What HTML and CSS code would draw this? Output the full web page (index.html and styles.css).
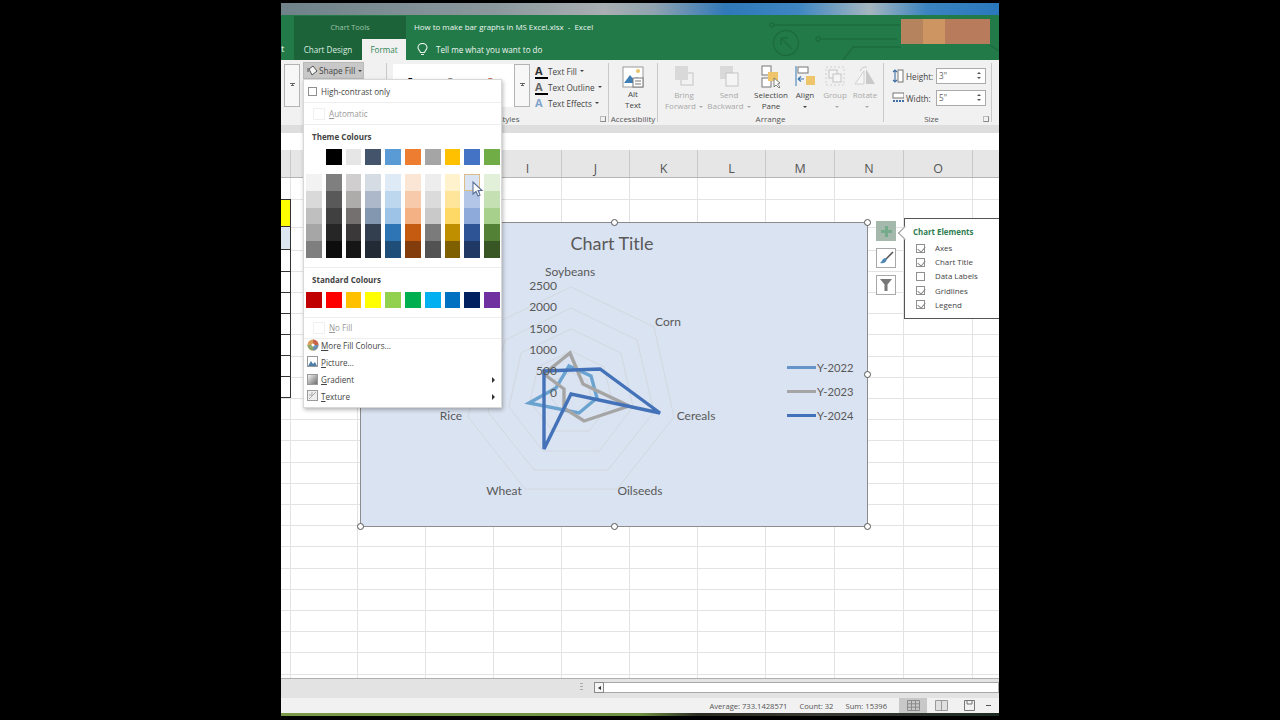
FILE: index.html
```html
<!DOCTYPE html>
<html lang="en">

<head>
    <meta charset="UTF-8">
    <meta name="viewport" content="width=device-width, initial-scale=1.0">
    <title>How to make bar graphs in MS Excel.xlsx - Excel</title>
    <link rel="stylesheet" href="styles.css">
</head>

<body>
    <div class="screen">
        <div class="desktop-strip"></div>

        <!-- title bar -->
        <div class="titlebar">
            <div class="tab-stub">t</div>
            <div class="chart-tools">
                <div class="chart-tools-label">Chart Tools</div>
                <div class="chart-tabs">
                    <div class="tab-design">Chart Design</div>
                    <div class="tab-format">Format</div>
                </div>
            </div>
            <div class="title-text">
                <div class="doc-name">How to make bar graphs in MS Excel.xlsx &nbsp;-&nbsp; Excel</div>
                <div class="tell-me">
                    <svg class="bulb" width="11" height="13" viewBox="0 0 11 13">
                        <path d="M3.5 9.5 C3 7.5 1 6.8 1 4.6 A4.5 4.2 0 0 1 10 4.6 C10 6.8 8 7.5 7.5 9.5 Z M4 11.5 H7" fill="none" stroke="#e8f2eb" stroke-width="1.1" />
                    </svg>
                    <span>Tell me what you want to do</span>
                </div>
            </div>
            <div class="user-blur">
                <div class="blur-a"></div>
                <div class="blur-b"></div>
                <div class="blur-c"></div>
            </div>
            <svg class="circuit" width="260" height="45" viewBox="0 0 260 45">
                <g fill="none" stroke="#1d6b3f" stroke-width="1.4">
                    <circle cx="47" cy="28" r="12.500" />
                    <path d="M42 23 L53 34 M42 23 H49 M42 23 V30" />
                    <path d="M35 10 H161" />
                    <circle cx="33" cy="10" r="2" />
                    <path d="M81 24 H158" />
                    <circle cx="79" cy="24" r="2" />
                    <path d="M104 45 L114 32 H162" />
                    <path d="M251 30 L260 36" />
                </g>
            </svg>
        </div>

        <!-- ribbon -->
        <div class="ribbon">
            <div class="group group-shape">
                <div class="more-btn short"><span class="more-arrow"></span></div>
                <div class="shape-fill-btn">
                    <svg width="12" height="11" viewBox="0 0 12 11">
                        <path d="M3 4 L7 1 L11 6 L6 10 Z" fill="#f4f4f4" stroke="#555" />
                        <path d="M2 3 V7" stroke="#777" stroke-width="1.5" />
                    </svg>
                    <span>Shape Fill</span>
                    <span class="caret"></span>
                </div>
            </div>

            <div class="group group-wordart">
                <div class="group-body">
                    <div class="wordart-gallery">
                        <span class="wa wa-black">A</span>
                        <span class="wa wa-gray">A</span>
                        <span class="wa wa-red">A</span>
                    </div>
                    <div class="more-btn"><span class="more-arrow"></span></div>
                    <div class="text-tools">
                        <div class="text-tool"><span class="a-icon a-fill">A</span>Text Fill<span class="caret"></span></div>
                        <div class="text-tool"><span class="a-icon a-outline">A</span>Text Outline<span class="caret"></span></div>
                        <div class="text-tool"><span class="a-icon a-effects">A</span>Text Effects<span class="caret"></span></div>
                    </div>
                </div>
                <div class="group-label wordart-label">WordArt Styles</div>
                <span class="launcher"></span>
            </div>

            <div class="group group-access">
                <div class="group-body">
                    <div class="tool tool-alt">
                        <div class="tool-icon">
                            <svg width="22" height="22" viewBox="0 0 22 22">
                                <rect x="1" y="1" width="20" height="20" fill="#fff" stroke="#9a9a9a" />
                                <path d="M2 17 L8 9 L12 14 L15 11 L20 17 Z" fill="#3f7fb5" />
                                <circle cx="16" cy="5" r="2" fill="#e9c46a" />
                                <rect x="11" y="12" width="10" height="9" fill="#fff" stroke="#777" />
                                <path d="M13 15 H19 M13 18 H19" stroke="#777" />
                            </svg>
                        </div>
                        <div>Alt</div>
                        <div>Text</div>
                    </div>
                </div>
                <div class="group-label">Accessibility</div>
            </div>

            <div class="group group-arrange">
                <div class="group-body">
                    <div class="tool tool-off w-bring">
                        <div class="tool-icon">
                            <svg width="20" height="22" viewBox="0 0 20 22">
                                <rect x="7" y="8" width="12" height="12" fill="#f2f2f2" stroke="#c4c4c4" />
                                <rect x="1" y="1" width="13" height="14" fill="#d9d9d9" />
                            </svg>
                        </div>
                        <div>Bring</div>
                        <div>Forward<span class="caret"></span></div>
                    </div>
                    <div class="tool tool-off w-send">
                        <div class="tool-icon">
                            <svg width="20" height="22" viewBox="0 0 20 22">
                                <rect x="1" y="1" width="13" height="13" fill="#d9d9d9" />
                                <rect x="7" y="8" width="12" height="13" fill="#f5f5f5" stroke="#c4c4c4" />
                            </svg>
                        </div>
                        <div>Send</div>
                        <div>Backward<span class="caret"></span></div>
                    </div>
                    <div class="tool w-pane">
                        <div class="tool-icon">
                            <svg width="20" height="23" viewBox="0 0 20 23">
                                <rect x="1" y="1" width="9" height="9" fill="#fff" stroke="#777" />
                                <rect x="1" y="13" width="9" height="9" fill="#fff" stroke="#777" />
                                <rect x="7" y="7" width="10" height="9" fill="#eec56b" />
                                <path d="M13 13 V22 L15 20 L18 23 L19 22 L16.5 19 L19 18 Z" fill="#fff" stroke="#666" stroke-width=".8" />
                            </svg>
                        </div>
                        <div>Selection</div>
                        <div>Pane</div>
                    </div>
                    <div class="tool w-align">
                        <div class="tool-icon">
                            <svg width="20" height="22" viewBox="0 0 20 22">
                                <path d="M1 1 V21" stroke="#6b9bc5" stroke-width="1.4" />
                                <rect x="3" y="2" width="10" height="6" fill="#fff" stroke="#777" />
                                <rect x="11" y="11" width="9" height="9" fill="#eec56b" />
                                <path d="M3 14 H9 M3 14 L6 11.5 M3 14 L6 16.5" fill="none" stroke="#3d78ad" stroke-width="1.2" />
                            </svg>
                        </div>
                        <div>Align</div>
                        <div><span class="caret dark"></span></div>
                    </div>
                    <div class="tool tool-off w-group">
                        <div class="tool-icon">
                            <svg width="20" height="22" viewBox="0 0 20 22">
                                <rect x="1" y="2" width="18" height="18" fill="none" stroke="#cfcfcf" stroke-dasharray="2 2" />
                                <rect x="4" y="5" width="8" height="8" fill="#f5f5f5" stroke="#c4c4c4" />
                                <rect x="8" y="9" width="8" height="8" fill="#f5f5f5" stroke="#c4c4c4" />
                            </svg>
                        </div>
                        <div>Group</div>
                        <div><span class="caret"></span></div>
                    </div>
                    <div class="tool tool-off w-rotate">
                        <div class="tool-icon">
                            <svg width="22" height="22" viewBox="0 0 22 22">
                                <path d="M12 4 L21 19 H12 Z" fill="#c9c9c9" />
                                <path d="M10 6 L10 19 H1 Z" fill="#f5f5f5" stroke="#cfcfcf" />
                                <path d="M6 6 A7 7 0 0 1 13 2" fill="none" stroke="#c9c9c9" />
                            </svg>
                        </div>
                        <div>Rotate</div>
                        <div><span class="caret"></span></div>
                    </div>
                </div>
                <div class="group-label arrange-label">Arrange</div>
            </div>

            <div class="group group-size">
                <div class="group-body size-body">
                    <div class="size-row">
                        <svg width="12" height="14" viewBox="0 0 12 14">
                            <rect x="6" y="1" width="5" height="12" fill="#fff" stroke="#777" />
                            <path d="M3 1 V13 M1 3 L3 1 L5 3 M1 11 L3 13 L5 11" fill="none" stroke="#3d6fa5" stroke-width="1.1" />
                        </svg>
                        <span class="size-name">Height:</span>
                        <div class="size-input">3"<span class="spin"><i class="up"></i><i class="down"></i></span></div>
                    </div>
                    <div class="size-row">
                        <svg width="12" height="12" viewBox="0 0 12 12">
                            <rect x="1" y="1" width="11" height="5" fill="#fff" stroke="#777" />
                            <path d="M1 9 H12" stroke="#3d6fa5" stroke-width="2" stroke-dasharray="2 1" />
                        </svg>
                        <span class="size-name">Width:</span>
                        <div class="size-input">5"<span class="spin"><i class="up"></i><i class="down"></i></span></div>
                    </div>
                </div>
                <div class="group-label size-label">Size</div>
                <span class="launcher"></span>
            </div>
        </div>

        <div class="ribbon-gap"></div>
        <div class="formula-bar"></div>

        <!-- sheet -->
        <div class="cols col-heads">
            <div></div>
            <div>F</div>
            <div>G</div>
            <div>H</div>
            <div>I</div>
            <div>J</div>
            <div>K</div>
            <div>L</div>
            <div>M</div>
            <div>N</div>
            <div>O</div>
            <div></div>
        </div>
        <div class="cols grid">
            <div class="left-cells">
                <div class="cell-yellow"></div>
                <div class="cell-blue"></div>
                <div class="cell-a"></div>
                <div class="cell-b"></div>
                <div class="cell-b"></div>
                <div class="cell-b"></div>
                <div class="cell-b"></div>
                <div class="cell-b"></div>
                <div class="cell-b"></div>
            </div>
            <div></div><div></div><div></div><div></div><div></div><div></div>
            <div></div><div></div><div></div><div></div><div></div>
        </div>

        <div class="sheet-bar">
            <div class="grip"></div>
            <div class="scroll-left"><span></span></div>
            <div class="scroll-track"></div>
        </div>

        <div class="status">
            <span class="stat avg">Average: 733.1428571</span>
            <span class="stat count">Count: 32</span>
            <span class="stat sum">Sum: 15396</span>
            <div class="view-btn active">
                <svg width="13" height="11" viewBox="0 0 13 11">
                    <path d="M.5 .5 H12.5 V10.5 H.5 Z M.5 3.8 H12.5 M.5 7.2 H12.5 M4.5 .5 V10.5 M8.5 .5 V10.5" fill="none" stroke="#8a8a8a" />
                </svg>
            </div>
            <div class="view-btn">
                <svg width="13" height="11" viewBox="0 0 13 11">
                    <path d="M.5 .5 H12.5 V10.5 H.5 Z M6.5 .5 V10.5" fill="#e0e0e0" stroke="#9a9a9a" />
                </svg>
            </div>
            <div class="view-btn">
                <svg width="13" height="11" viewBox="0 0 13 11">
                    <path d="M1.5 .5 H11.5 V10.5 H1.5 Z M4 .5 V4 H9 V.5" fill="none" stroke="#777" />
                </svg>
            </div>
            <div class="zoom-minus"></div>
        </div>
        <div class="bottom-strip"></div>

        <!-- chart -->
        <div class="chart">
            <svg class="radar" width="506" height="303" viewBox="0 0 506 303">
                <g transform="translate(210 170)">
                    <g fill="none" stroke="#d2d8e0" stroke-width="1">
                        <polygon points="0,-106 83,-66 103,24 46,96 -46,96 -103,24 -83,-66" />
                        <polygon points="0,-85 66,-53 83,19 37,77 -37,77 -83,19 -66,-53" />
                        <polygon points="0,-64 50,-40 62,14 28,58 -28,58 -62,14 -50,-40" />
                        <polygon points="0,-42 33,-26 41,9 18,38 -18,38 -41,9 -33,-26" />
                        <polygon points="0,-21 16,-13 20,5 9,19 -9,19 -20,5 -16,-13" />
                    </g>
                    <g fill="none" stroke-width="3.4" stroke-linejoin="miter">
                        <polygon points="-2,-27 20,-17 26,5 8,20 -42,10 -15,-5" stroke="#6ba3d0" />
                        <polygon points="-27,-19 -1,-40 12,-9 58,13 13,28 -7,15 -7,-4" stroke="#a5a5a5" />
                        <polygon points="-27,-22 29,-24 89,20 0,1 -27,56" stroke="#4472b8" />
                    </g>
                </g>
                <g class="axis-labels">
                    <text x="196" y="67">2500</text>
                    <text x="196" y="88">2000</text>
                    <text x="196" y="110">1500</text>
                    <text x="196" y="131">1000</text>
                    <text x="196" y="152">500</text>
                    <text x="196" y="174">0</text>
                </g>
                <text class="chart-title" x="251" y="27">Chart Title</text>
                <g class="cat-labels">
                    <text x="209" y="53">Soybeans</text>
                    <text x="307" y="103">Corn</text>
                    <text x="335" y="197">Cereals</text>
                    <text x="279" y="272">Oilseeds</text>
                    <text x="143" y="272">Wheat</text>
                    <text x="90" y="197">Rice</text>
                </g>
                <g stroke-width="3">
                    <path d="M426 144.500 H455" stroke="#6494c8" />
                    <path d="M426 168.500 H455" stroke="#a5a5a5" />
                    <path d="M426 192.500 H455" stroke="#4472b8" />
                </g>
                <g class="legend-labels">
                    <text x="456" y="149">Y-2022</text>
                    <text x="456" y="173">Y-2023</text>
                    <text x="456" y="197">Y-2024</text>
                </g>
            </svg>
            <span class="handle h-tl"></span>
            <span class="handle h-tc"></span>
            <span class="handle h-tr"></span>
            <span class="handle h-ml"></span>
            <span class="handle h-mr"></span>
            <span class="handle h-bl"></span>
            <span class="handle h-bc"></span>
            <span class="handle h-br"></span>
        </div>

        <div class="chart-btn btn-plus">
            <svg width="13" height="13" viewBox="0 0 13 13">
                <path d="M6.500 1 V12 M1 6.500 H12" stroke="#74ab8b" stroke-width="3" />
            </svg>
        </div>
        <div class="chart-btn btn-brush">
            <svg width="15" height="15" viewBox="0 0 15 15">
                <path d="M14 1 L7 8" stroke="#555" stroke-width="1.5" />
                <path d="M8 8 C7 12 4 13 1 12 C3 11 3 8 6 7 Z" fill="#4b86b5" />
            </svg>
        </div>
        <div class="chart-btn btn-filter">
            <svg width="14" height="14" viewBox="0 0 14 14">
                <path d="M1 1 H13 L8.500 6.500 V13 H5.500 V6.500 Z" fill="#777" />
            </svg>
        </div>

        <div class="elements-panel">
            <div class="panel-title">Chart Elements</div>
            <div class="el-row"><span class="check on"></span>Axes</div>
            <div class="el-row"><span class="check on"></span>Chart Title</div>
            <div class="el-row"><span class="check"></span>Data Labels</div>
            <div class="el-row"><span class="check on"></span>Gridlines</div>
            <div class="el-row"><span class="check on"></span>Legend</div>
        </div>

        <!-- shape fill menu -->
        <div class="menu">
            <div class="menu-row contrast"><span class="check menu-check"></span>High-contrast only</div>
            <div class="menu-row auto"><span class="ghost-swatch"></span><span><u>A</u>utomatic</span></div>
            <div class="menu-head theme-head">Theme Colours</div>
            <div class="swatches" id="themeRow"></div>
            <div class="shades" id="shadeGrid"></div>
            <div class="menu-head std-head">Standard Colours</div>
            <div class="swatches" id="standardRow"></div>
            <div class="menu-row nofill"><span class="ghost-swatch"></span><span><u>N</u>o Fill</span></div>
            <div class="menu-item">
                <svg width="12" height="12" viewBox="0 0 12 12">
                    <circle cx="6" cy="6" r="5.500" fill="#d9a05b" />
                    <path d="M6 6 L6 .5 A5.500 5.500 0 0 1 11.500 6 Z" fill="#c9654b" />
                    <path d="M6 6 L11.500 6 A5.500 5.500 0 0 1 6 11.500 Z" fill="#6d8fb0" />
                    <path d="M6 6 L6 11.500 A5.500 5.500 0 0 1 .5 6 Z" fill="#8da86b" />
                    <circle cx="6" cy="6" r="1.500" fill="#fff" />
                </svg>
                <span><u>M</u>ore Fill Colours...</span>
            </div>
            <div class="menu-item">
                <svg width="12" height="12" viewBox="0 0 12 12">
                    <rect x=".5" y=".5" width="10" height="10" fill="#fff" stroke="#999" />
                    <path d="M1 10 L4 5 L6 8 L8 6 L10 10 Z" fill="#4d7ea8" />
                </svg>
                <span><u>P</u>icture...</span>
            </div>
            <div class="menu-item">
                <span class="gradient-icon"></span>
                <span><u>G</u>radient</span>
                <span class="sub-arrow"></span>
            </div>
            <div class="menu-item">
                <svg width="12" height="12" viewBox="0 0 12 12">
                    <rect x=".5" y=".5" width="10" height="10" fill="#eee" stroke="#999" />
                    <path d="M2 9 L9 2 M2 5 H5 V2" fill="none" stroke="#aaa" />
                </svg>
                <span><u>T</u>exture</span>
                <span class="sub-arrow"></span>
            </div>
        </div>

        <svg class="cursor" width="12" height="16" viewBox="0 0 12 16">
            <path d="M1 1 V13 L4 10.500 L6 15 L8 14 L6 9.500 H10 Z" fill="#fff" stroke="#5a6f96" stroke-width="1.100" />
        </svg>
    </div>

    <script src="script.js"></script>
</body>

</html>
```

FILE: styles.css
```css
* {
    box-sizing: border-box;
}

html,
body {
    height: 100%;
}

body {
    margin: 0;
    background: #000;
    display: flex;
    justify-content: center;
    overflow: hidden;
    font-family: "Open Sans", "Liberation Sans", sans-serif;
    font-size: 8.2px;
    color: #444;
}

.screen {
    position: relative;
    width: 718px;
    height: 720px;
    padding: 3px 0 4px;
    display: flex;
    flex-direction: column;
    overflow: hidden;
}

.desktop-strip {
    height: 12px;
    background: linear-gradient(to right, #6f8289 0, #8b999e 30%, #a9afb2 45%, #8fa3b0 52%, #2f78b9 62%, #3d86c2 72%, #a5b6bf 82%, #3a83c0 90%, #2a78bd 100%);
}

/* title bar */
.titlebar {
    position: relative;
    height: 45px;
    background: #217a48;
    display: flex;
    color: #f0f6f2;
    font-size: 8.1px;
}

.tab-stub {
    width: 13px;
    padding-top: 27px;
    line-height: 14px;
    font-size: 9.5px;
}

.chart-tools {
    width: 112px;
    margin-top: 1px;
    background: #1c6339;
    display: flex;
    flex-direction: column;
    position: relative;
    z-index: 1;
}

.chart-tools-label {
    height: 23px;
    line-height: 22px;
    text-align: center;
    color: #9cc4ab;
    font-size: 7.4px;
}

.chart-tabs {
    display: flex;
    height: 21px;
    line-height: 21px;
}

.tab-design {
    width: 68px;
    text-align: center;
    color: #dcebe2;
}

.tab-format {
    width: 44px;
    text-align: center;
    background: #f1f1f1;
    color: #2f8455;
}

.title-text {
    padding-left: 8px;
    position: relative;
    z-index: 1;
}

.doc-name {
    height: 24px;
    line-height: 24px;
    font-size: 7.9px;
}

.tell-me {
    display: flex;
    align-items: center;
    gap: 8px;
    padding-left: 3px;
    height: 20px;
}

.user-blur {
    position: absolute;
    left: 620px;
    top: 4px;
    z-index: 1;
    width: 89px;
    height: 25px;
    display: flex;
}

.blur-a {
    width: 22px;
    background: #b5845f;
}

.blur-b {
    width: 22px;
    background: #cd9561;
}

.blur-c {
    flex: 1;
    background: #b87b5c;
}

.circuit {
    position: absolute;
    left: 458px;
    top: 0;
}

/* ribbon */
.ribbon {
    height: 65px;
    padding-top: 3px;
    background: #f1f1f1;
    display: flex;
}

.group {
    position: relative;
    height: 59px;
    border-right: 1px solid #c8c8c8;
}

.group-body {
    height: 50px;
    display: flex;
}

.group-label {
    height: 9px;
    line-height: 12px;
    text-align: center;
    color: #555;
    font-size: 8px;
}

.launcher {
    position: absolute;
    right: 2px;
    bottom: 0;
    width: 6px;
    height: 6px;
    border: 1px solid #888;
    border-top-color: #bbb;
    border-left-color: #bbb;
}

.caret {
    display: inline-block;
    width: 0;
    height: 0;
    margin-left: 3px;
    vertical-align: middle;
    border-left: 2.500px solid transparent;
    border-right: 2.500px solid transparent;
    border-top: 2.500px solid currentColor;
}

.caret.dark {
    color: #444;
    margin-left: 0;
}

.more-btn {
    width: 16px;
    height: 43px;
    margin-top: 1px;
    background: #f7f7f7;
    border: 1px solid #b4b4b4;
    display: flex;
    align-items: center;
    justify-content: center;
}

.more-btn.short {
    flex: none;
    margin-left: 3px;
}

.more-arrow {
    width: 5px;
    height: 5px;
    border-top: 1px solid #666;
    border-bottom: 2px solid transparent;
    background: linear-gradient(135deg, transparent 50%, #666 50%) left / 50% 100% no-repeat, linear-gradient(225deg, transparent 50%, #666 50%) right / 50% 100% no-repeat;
}

.group-shape {
    width: 106px;
    display: flex;
    align-items: flex-start;
}

.shape-fill-btn {
    width: 61px;
    height: 17px;
    margin: -1px 0 0 3px;
    padding-left: 2px;
    background: #c8c8c8;
    border: 1px solid #b9b9b9;
    display: flex;
    align-items: center;
    gap: 1px;
    color: #444;
    white-space: nowrap;
}

.shape-fill-btn .caret {
    margin-left: 2px;
}

.group-wordart {
    width: 222px;
}

.group-wordart .group-body {
    padding-left: 6px;
}

.wordart-gallery {
    width: 121px;
    height: 43px;
    margin-top: 1px;
    background: #fff;
    display: flex;
    padding: 11px 0 0 11px;
    gap: 22px;
    overflow: hidden;
}

.wa {
    font-size: 18px;
    line-height: 18px;
    font-weight: 700;
    width: 18px;
}

.wa-black {
    color: #000;
}

.wa-gray {
    color: #8a8a8a;
}

.wa-red {
    color: #c8735e;
}

.text-tools {
    margin-left: 5px;
}

.text-tool {
    height: 16px;
    display: flex;
    align-items: center;
    color: #444;
}

.a-icon {
    width: 13px;
    font-size: 11px;
    font-weight: 700;
    line-height: 13px;
    text-align: left;
    border-bottom: 2px solid transparent;
}

.a-fill {
    color: #333;
    border-bottom-color: #000;
}

.a-outline {
    color: #666;
    border-bottom-color: #000;
}

.a-effects {
    color: #7fa4cc;
}

.wordart-label {
    width: 210px;
}

.group-access {
    width: 49px;
}

.tool {
    flex: none;
    text-align: center;
    line-height: 11px;
    font-size: 8px;
    color: #444;
    white-space: nowrap;
}

.tool-off {
    color: #a9a9a9;
}

.tool-icon {
    height: 26px;
    padding-top: 2px;
    display: flex;
    justify-content: center;
    align-items: flex-start;
}

.tool-alt {
    width: 48px;
}

.tool-alt .tool-icon {
    padding-top: 3px;
    height: 25px;
}

.group-arrange {
    width: 226px;
}

.group-arrange .group-body {
    padding-left: 3px;
}

.w-bring {
    width: 46px;
}

.w-send {
    width: 44px;
}

.w-pane {
    width: 40px;
}

.w-align {
    width: 28px;
}

.w-group {
    width: 32px;
}

.w-rotate {
    width: 28px;
}

.group-size {
    width: 108px;
}

.size-body {
    display: block;
    padding: 5px 0 0 8px;
}

.size-row {
    height: 16px;
    margin-bottom: 6px;
    display: flex;
    align-items: center;
    gap: 2px;
}

.size-row svg {
    flex: none;
}

.size-name {
    width: 28px;
    color: #444;
}

.size-input {
    width: 50px;
    height: 16px;
    padding-left: 2px;
    line-height: 14px;
    background: #fff;
    border: 1px solid #aaa;
    position: relative;
    color: #666;
}

.spin {
    position: absolute;
    right: 4px;
    top: 3px;
    display: flex;
    flex-direction: column;
    gap: 3px;
}

.spin i {
    width: 0;
    height: 0;
    border-left: 2px solid transparent;
    border-right: 2px solid transparent;
}

.spin .up {
    border-bottom: 2px solid #555;
}

.spin .down {
    border-top: 2px solid #555;
}

.size-label {
    padding-right: 12px;
}

.ribbon-gap {
    height: 8px;
    background: #dedede;
}

.formula-bar {
    height: 17px;
    background: #fff;
}

/* sheet */
.cols {
    display: grid;
    grid-template-columns: 10px 67px 68px 68px 68px 68px 68px 68px 69px 69px 69px 26px;
}

.col-heads {
    height: 28px;
    background: #e6e6e6;
    border-bottom: 1px solid #b5b5b5;
    font-size: 12.5px;
    text-align: center;
    color: #555;
}

.col-heads > div {
    border-right: 1px solid #c9c9c9;
    height: 27px;
    line-height: 38px;
    overflow: hidden;
}

.col-heads > div:last-child {
    border-right: 0;
}

.grid {
    flex: 1;
    background:
        linear-gradient(#e3e3e3, #e3e3e3) 0 21px / 100% 1px no-repeat,
        linear-gradient(#e3e3e3, #e3e3e3) 0 49px / 100% 1px no-repeat,
        repeating-linear-gradient(to bottom, #e3e3e3 0, #e3e3e3 1px, #fff 1px, #fff 21px, #e3e3e3 21px, #e3e3e3 22px, #fff 22px, #fff 42px, #e3e3e3 42px, #e3e3e3 43px, #fff 43px, #fff 63px, #e3e3e3 63px, #e3e3e3 64px, #fff 64px, #fff 84px, #e3e3e3 84px, #e3e3e3 85px, #fff 85px, #fff 106px) 0 72px / 100% 100% no-repeat,
        #fff;
}

.grid > div {
    border-right: 1px solid #e3e3e3;
}

.grid > div:last-child {
    border-right: 0;
}

.left-cells {
    padding-top: 21px;
}

.left-cells div {
    border-right: 1px solid #333;
    border-bottom: 1px solid #333;
    margin-right: -1px;
    background: #fff;
}

.left-cells .cell-yellow {
    height: 28px;
    background: #ffff00;
    border-top: 1px solid #333;
}

.left-cells .cell-blue {
    height: 23px;
    background: #dce6f1;
}

.cell-a {
    height: 22px;
}

.cell-b {
    height: 21px;
}

.sheet-bar {
    height: 20px;
    background: #e3e3e3;
    border-top: 1px solid #b0b0b0;
    display: flex;
    align-items: center;
    padding: 0 0 2px 299px;
}

.grip {
    width: 3px;
    height: 9px;
    margin-right: 11px;
    background: repeating-linear-gradient(to bottom, #aaa 0, #aaa 1px, transparent 1px, transparent 3px);
}

.scroll-left {
    width: 10px;
    height: 11px;
    background: #f5f5f5;
    border: 1px solid #8a8a8a;
    display: flex;
    align-items: center;
    justify-content: center;
}

.scroll-left span {
    width: 0;
    height: 0;
    border-top: 2.500px solid transparent;
    border-bottom: 2.500px solid transparent;
    border-right: 3px solid #333;
}

.scroll-track {
    flex: 1;
    height: 11px;
    background: #fff;
    border: 1px solid #a8a8a8;
    border-left: 0;
}

.status {
    height: 15px;
    background: #f1f1f1;
    display: flex;
    align-items: center;
    justify-content: flex-end;
    font-size: 7.6px;
    color: #555;
    white-space: nowrap;
}

.stat {
    margin-right: 12px;
}

.view-btn {
    width: 28px;
    height: 15px;
    display: flex;
    align-items: center;
    justify-content: center;
}

.view-btn.active {
    background: #c8c8c8;
}

.zoom-minus {
    width: 16px;
    height: 15px;
    background: linear-gradient(#555, #555) 3px 7px / 5px 1px no-repeat;
}

.bottom-strip {
    height: 3px;
    background: linear-gradient(to right, #7a9a48 0, #6f9143 50%, #2a2a22 58%, #3b3a34 75%, #1c2a22 100%);
}

/* chart */
.chart {
    position: absolute;
    left: 79px;
    top: 222px;
    width: 508px;
    height: 305px;
    background: #dae3f1;
    border: 1px solid #8c8c8c;
}

.radar {
    display: block;
    font-family: "Lato", "Liberation Sans", sans-serif;
    fill: #595959;
    font-size: 12px;
}

.axis-labels {
    text-anchor: end;
}

.cat-labels {
    text-anchor: middle;
}

.chart-title {
    text-anchor: middle;
    font-size: 18px;
}

.legend-labels {
    font-size: 11.200px;
}

.handle {
    position: absolute;
    width: 7px;
    height: 7px;
    border-radius: 50%;
    background: #fff;
    border: 1.200px solid #555;
}

.h-tl,
.h-tc,
.h-tr {
    top: -4px;
}

.h-ml,
.h-mr {
    top: 148px;
}

.h-bl,
.h-bc,
.h-br {
    bottom: -4px;
}

.h-tl,
.h-ml,
.h-bl {
    left: -4px;
}

.h-tc,
.h-bc {
    left: 250px;
}

.h-tr,
.h-mr,
.h-br {
    right: -4px;
}

.chart-btn {
    position: absolute;
    left: 595px;
    width: 20px;
    height: 20px;
    background: #fff;
    border: 1px solid #a8a8a8;
    display: flex;
    align-items: center;
    justify-content: center;
}

.btn-plus {
    top: 221px;
    background: #a4b8ac;
    border-color: #a4b8ac;
}

.btn-brush {
    top: 248px;
}

.btn-filter {
    top: 275px;
}

.elements-panel {
    position: absolute;
    left: 623px;
    top: 218px;
    width: 110px;
    height: 101px;
    padding: 6px 0 0 8px;
    background: #fff;
    border: 1px solid #555;
    font-size: 7.9px;
    color: #444;
}

.elements-panel::before {
    content: "";
    position: absolute;
    left: -5px;
    top: 9px;
    width: 9px;
    height: 9px;
    background: #fff;
    border-left: 1px solid #999;
    border-bottom: 1px solid #999;
    transform: rotate(45deg);
}

.panel-title {
    height: 15px;
    line-height: 15px;
    margin-bottom: 1px;
    font-weight: 700;
    color: #2f7d52;
}

.el-row {
    height: 14.200px;
    display: flex;
    align-items: center;
}

.check {
    flex: none;
    width: 9px;
    height: 9px;
    margin: 0 10px 0 3px;
    background: #fff;
    border: 1px solid #8f8f8f;
    position: relative;
}

.check.on::after {
    content: "";
    position: absolute;
    left: 1.500px;
    top: 0;
    width: 4px;
    height: 6px;
    border-right: 1px solid #888;
    border-bottom: 1px solid #888;
    transform: rotate(40deg);
}

/* menu */
.menu {
    position: absolute;
    left: 22px;
    top: 79px;
    width: 199px;
    height: 329px;
    background: #fff;
    border: 1px solid #d8d8d8;
    box-shadow: 1px 2px 4px rgba(0, 0, 0, 0.28);
    color: #444;
    font-size: 8.1px;
}

.menu-row {
    display: flex;
    align-items: center;
}

.contrast {
    height: 23px;
    padding-left: 4px;
    border-bottom: 1px solid #eee;
}

.menu-check {
    margin: 0 4px 0 0;
}

.auto {
    height: 22px;
    padding-left: 9px;
    border-bottom: 1px solid #eee;
    color: #999;
}

.ghost-swatch {
    width: 12px;
    height: 12px;
    margin-right: 4px;
    border: 1px solid #f0f0f0;
}

.menu-head {
    padding-left: 8px;
    font-weight: 700;
    font-size: 8px;
    color: #444;
}

.theme-head {
    height: 24px;
    line-height: 23px;
}

.swatches,
.shades {
    width: 194px;
    margin-left: 2px;
    display: grid;
    grid-template-columns: repeat(10, 1fr);
    column-gap: 4px;
}

.swatch {
    height: 16px;
}

.shades {
    margin-top: 9px;
    grid-auto-flow: column;
    grid-template-rows: repeat(5, 16.800px);
}

.shade.hover {
    border: 1px solid #dcbf86;
}

.std-head {
    height: 34px;
    padding-top: 10px;
    line-height: 23px;
    position: relative;
}

.std-head::before {
    content: "";
    position: absolute;
    left: 0;
    right: 0;
    top: 9px;
    border-top: 1px solid #eee;
}

.nofill {
    height: 22px;
    margin: 9px 0 -2px;
    padding-left: 9px;
    border-top: 1px solid #eee;
    border-bottom: 1px solid #eee;
    color: #999;
}

.menu-item {
    height: 17px;
    padding-left: 3px;
    display: flex;
    align-items: center;
    gap: 2px;
    position: relative;
}

.gradient-icon {
    width: 11px;
    height: 11px;
    margin-right: 1px;
    background: linear-gradient(135deg, #f2f2f2, #6f6f6f);
    border: 1px solid #999;
}

.sub-arrow {
    position: absolute;
    right: 6px;
    top: 6px;
    width: 0;
    height: 0;
    border-top: 3px solid transparent;
    border-bottom: 3px solid transparent;
    border-left: 3px solid #333;
}

.cursor {
    position: absolute;
    left: 191px;
    top: 181px;
}
```

FILE: script.js
```js
// colours of the shape fill palette
const theme = ['#ffffff', '#000000', '#e7e6e6', '#44546a', '#5b9bd5', '#ed7d31', '#a5a5a5', '#ffc000', '#4472c4', '#70ad47']
const shades = [
    ['#f2f2f2', '#d9d9d9', '#bfbfbf', '#a6a6a6', '#7f7f7f'],
    ['#7f7f7f', '#595959', '#404040', '#262626', '#0d0d0d'],
    ['#d0cece', '#aeabab', '#757070', '#3a3838', '#171616'],
    ['#d6dce4', '#adb9ca', '#8497b0', '#333f4f', '#222b35'],
    ['#deeaf6', '#bdd7ee', '#9dc3e6', '#2e75b5', '#1f4e79'],
    ['#fbe5d5', '#f7caac', '#f4b183', '#c55a11', '#833c0b'],
    ['#ededed', '#dbdbdb', '#c9c9c9', '#7b7b7b', '#525252'],
    ['#fff2cc', '#ffe599', '#ffd966', '#bf8f00', '#7f6000'],
    ['#dae3f3', '#b4c6e7', '#8eaadb', '#2f5496', '#1f3864'],
    ['#e2efd9', '#c5e0b3', '#a8d08d', '#538135', '#375623']
]
const standard = ['#c00000', '#ff0000', '#ffc000', '#ffff00', '#92d050', '#00b050', '#00b0f0', '#0070c0', '#002060', '#7030a0']

function addSwatch(parent, colour, cls) {
    let d = document.createElement('div')
    d.className = cls
    d.style.background = colour
    parent.appendChild(d)
    return d
}

let themeRow = document.getElementById('themeRow')
let shadeGrid = document.getElementById('shadeGrid')
let standardRow = document.getElementById('standardRow')

theme.forEach(c => addSwatch(themeRow, c, 'swatch'))
standard.forEach(c => addSwatch(standardRow, c, 'swatch'))
shades.forEach((col, i) => {
    col.forEach((c, j) => {
        let d = addSwatch(shadeGrid, c, 'shade')
        // the mouse is over this one
        if (i == 8 && j == 0) d.classList.add('hover')
    })
})
```
